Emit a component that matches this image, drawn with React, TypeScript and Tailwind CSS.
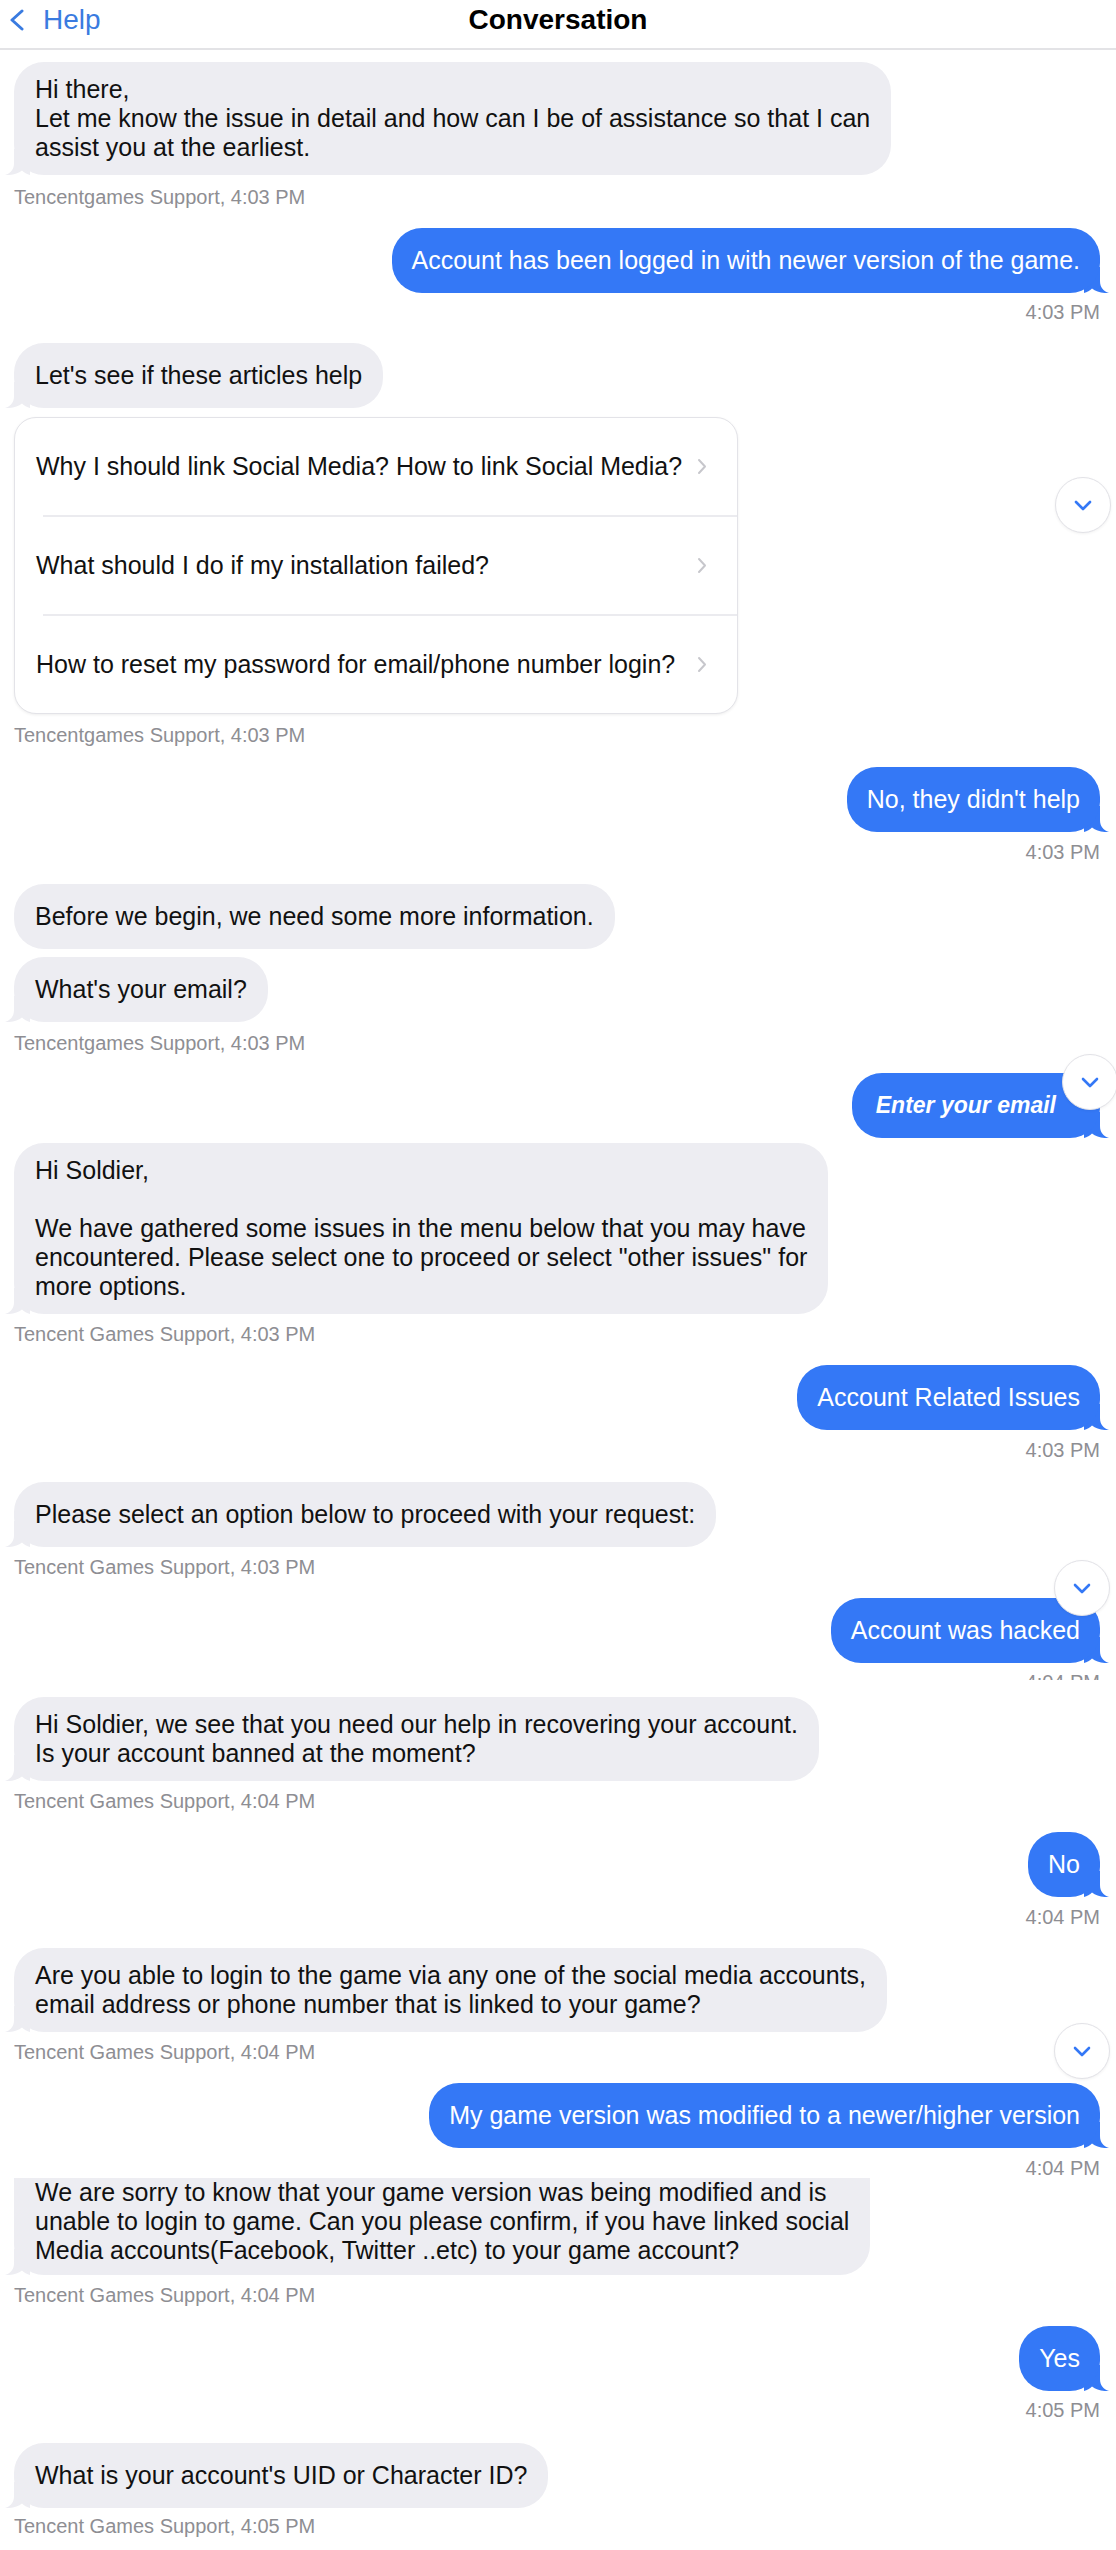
import React from "react";

const GRAY = "#ededf2";
const BLUE = "#3478f6";

function GrayTail() {
  return (
    <svg className="absolute left-[-10px] bottom-0" width="26" height="26" viewBox="0 0 26 26">
      <path
        fill={GRAY}
        d="M10 0 L10 14 C10 20 7 24 1 26 C8 26.5 14 24.5 18 21.5 C20 23.5 23 25 26 26 L26 0 Z"
      />
    </svg>
  );
}

function BlueTail() {
  return (
    <svg className="absolute right-[-10px] bottom-0" width="26" height="26" viewBox="0 0 26 26">
      <path
        fill={BLUE}
        d="M16 0 L16 14 C16 20 19 24 25 26 C18 26.5 12 24.5 8 21.5 C6 23.5 3 25 0 26 L0 0 Z"
      />
    </svg>
  );
}

function Gray({ children, tail = true, mt }: { children: React.ReactNode; tail?: boolean; mt: string }) {
  return (
    <div className={`relative w-fit ${mt}`}>
      <div className="relative z-10 flex min-h-[65px] items-center rounded-[30px] bg-[#ededf2] px-[21px] py-[13px] text-[25px] leading-[29px] text-[#111] whitespace-nowrap">
        <div>{children}</div>
      </div>
      {tail && <GrayTail />}
    </div>
  );
}

function Blue({ children, mt, italic = false }: { children: React.ReactNode; mt: string; italic?: boolean }) {
  return (
    <div className={`relative w-fit self-end ${mt}`}>
      <div
        className={`relative z-10 flex min-h-[65px] items-center rounded-[30px] bg-[#3478f6] py-[13px] text-[25px] leading-[29px] text-white whitespace-nowrap ${
          italic ? "pl-[24px] pr-[44px]" : "px-[20px]"
        }`}
      >
        {italic ? (
          <div className="text-[23px] font-bold italic">{children}</div>
        ) : (
          <div>{children}</div>
        )}
      </div>
      <BlueTail />
    </div>
  );
}

function Label({ children, mt }: { children: React.ReactNode; mt: string }) {
  return <div className={`${mt} text-[20px] leading-[24px] text-[#8e8e93]`}>{children}</div>;
}

function Time({ children, mt, h = "h-[24px]" }: { children: React.ReactNode; mt: string; h?: string }) {
  return (
    <div className={`${mt} ${h} self-end text-right text-[20px] leading-[24px] text-[#8e8e93]`}>{children}</div>
  );
}

function Chevron({ className }: { className: string }) {
  return (
    <div
      className={`absolute z-20 flex h-[56px] w-[56px] items-center justify-center rounded-full border border-[#e2e2e7] bg-white shadow-[0_1px_3px_rgba(0,0,0,0.06)] ${className}`}
    >
      <svg width="18" height="11" viewBox="0 0 18 11">
        <path d="M2 2 L9 9 L16 2" fill="none" stroke={BLUE} strokeWidth="2.6" strokeLinecap="round" strokeLinejoin="round" />
      </svg>
    </div>
  );
}

function ArticleRow({ text }: { text: string }) {
  return (
    <div className="flex h-[97px] items-center justify-between pl-[21px] pr-[30px]">
      <span className="text-[25px] leading-[29px] text-[#111] whitespace-nowrap">{text}</span>
      <svg width="10" height="17" viewBox="0 0 10 17">
        <path d="M2 2 L8 8.5 L2 15" fill="none" stroke="#c7c7cc" strokeWidth="2" strokeLinecap="round" strokeLinejoin="round" />
      </svg>
    </div>
  );
}

export default function App() {
  return (
    <div className="relative w-[1116px] bg-white pb-[12px] font-['Liberation_Sans',Arial,sans-serif]">
      {/* Header */}
      <div className="grid h-[50px] grid-cols-[1fr_auto_1fr] items-start border-b-2 border-[#e3e3e6] pt-[3px]">
        <div className="flex h-[34px] items-center">
          <svg className="ml-[9px]" width="16" height="22" viewBox="0 0 16 22">
            <path d="M13 2 L3 11 L13 20" fill="none" stroke="#3a7be0" strokeWidth="3" strokeLinecap="round" strokeLinejoin="round" />
          </svg>
          <span className="ml-[18px] text-[28px] leading-[34px] text-[#3a7be0]">Help</span>
        </div>
        <div className="text-[28px] font-bold leading-[34px] text-black">Conversation</div>
        <div />
      </div>

      {/* Messages */}
      <div className="flex flex-col items-start pl-[14px] pr-[16px]">
        <Gray mt="mt-[12px]">
          Hi there,
          <br />
          Let me know the issue in detail and how can I be of assistance so that I can
          <br />
          assist you at the earliest.
        </Gray>
        <Label mt="mt-[10px]">Tencentgames Support, 4:03 PM</Label>

        <Blue mt="mt-[19px]">Account has been logged in with newer version of the game.</Blue>
        <Time mt="mt-[7px]">4:03 PM</Time>

        <Gray mt="mt-[19px]">Let's see if these articles help</Gray>

        <div className="mt-[9px] w-[724px] rounded-[22px] border border-[#e3e3e8] bg-white shadow-[0_1px_3px_rgba(0,0,0,0.07)]">
          <ArticleRow text="Why I should link Social Media? How to link Social Media?" />
          <div className="ml-[28px] h-[2px] bg-[#ebebef]" />
          <ArticleRow text="What should I do if my installation failed?" />
          <div className="ml-[28px] h-[2px] bg-[#ebebef]" />
          <ArticleRow text="How to reset my password for email/phone number login?" />
        </div>
        <Label mt="mt-[9px]">Tencentgames Support, 4:03 PM</Label>

        <Blue mt="mt-[20px]">No, they didn't help</Blue>
        <Time mt="mt-[8px]">4:03 PM</Time>

        <Gray mt="mt-[20px]" tail={false}>
          Before we begin, we need some more information.
        </Gray>
        <Gray mt="mt-[8px]">What's your email?</Gray>
        <Label mt="mt-[9px]">Tencentgames Support, 4:03 PM</Label>

        <Blue mt="mt-[18px]" italic>
          Enter your email
        </Blue>

        <Gray mt="mt-[5px]">
          Hi Soldier,
          <br />
          <br />
          We have gathered some issues in the menu below that you may have
          <br />
          encountered. Please select one to proceed or select "other issues" for
          <br />
          more options.
        </Gray>
        <Label mt="mt-[8px]">Tencent Games Support, 4:03 PM</Label>

        <Blue mt="mt-[19px]">Account Related Issues</Blue>
        <Time mt="mt-[8px]">4:03 PM</Time>

        <Gray mt="mt-[20px]">Please select an option below to proceed with your request:</Gray>
        <Label mt="mt-[8px]">Tencent Games Support, 4:03 PM</Label>

        <Blue mt="mt-[19px]">Account was hacked</Blue>
        <div className="mt-[9px] h-[8px] self-end overflow-hidden text-right text-[20px] leading-[20px] text-[#8e8e93]">
          4:04 PM
        </div>

        <Gray mt="mt-[17px]">
          Hi Soldier, we see that you need our help in recovering your account.
          <br />
          Is your account banned at the moment?
        </Gray>
        <Label mt="mt-[8px]">Tencent Games Support, 4:04 PM</Label>

        <Blue mt="mt-[19px]">No</Blue>
        <Time mt="mt-[8px]">4:04 PM</Time>

        <Gray mt="mt-[19px]">
          Are you able to login to the game via any one of the social media accounts,
          <br />
          email address or phone number that is linked to your game?
        </Gray>
        <Label mt="mt-[8px]">Tencent Games Support, 4:04 PM</Label>

        <Blue mt="mt-[19px]">My game version was modified to a newer/higher version</Blue>
        <Time mt="mt-[8px]" h="h-[22px]">
          4:04 PM
        </Time>

        <div className="relative w-fit">
          <div className="relative z-10 rounded-b-[30px] bg-[#ededf2] px-[21px] pb-[10px] text-[25px] leading-[29px] text-[#111] whitespace-nowrap">
            We are sorry to know that your game version was being modified and is
            <br />
            unable to login to game. Can you please confirm, if you have linked social
            <br />
            Media accounts(Facebook, Twitter ..etc) to your game account?
          </div>
          <GrayTail />
        </div>
        <Label mt="mt-[8px]">Tencent Games Support, 4:04 PM</Label>

        <Blue mt="mt-[19px]">Yes</Blue>
        <Time mt="mt-[7px]">4:05 PM</Time>

        <Gray mt="mt-[21px]">What is your account's UID or Character ID?</Gray>
        <Label mt="mt-[6px]">Tencent Games Support, 4:05 PM</Label>
      </div>

      {/* Scroll-down buttons overlaying the chat */}
      <Chevron className="left-[1055px] top-[477px]" />
      <Chevron className="left-[1062px] top-[1054px]" />
      <Chevron className="left-[1054px] top-[1560px]" />
      <Chevron className="left-[1054px] top-[2023px]" />
    </div>
  );
}
